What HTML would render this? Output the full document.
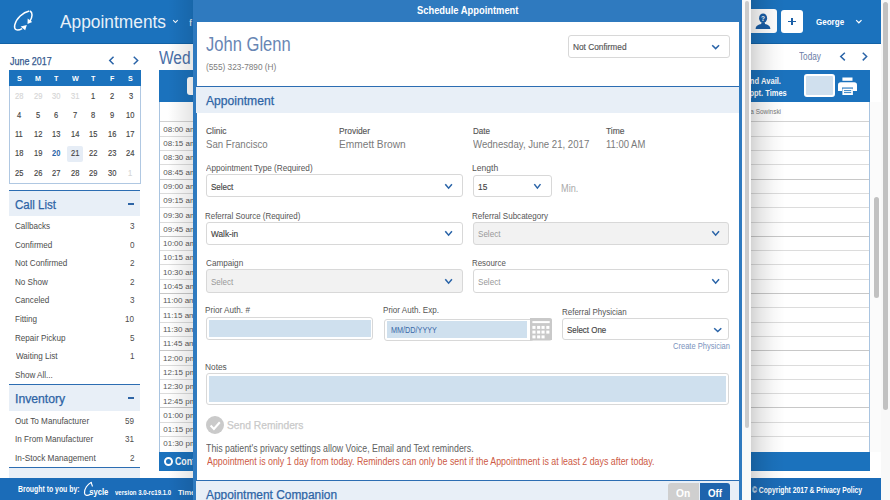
<!DOCTYPE html>
<html><head><meta charset="utf-8">
<style>
*{margin:0;padding:0;box-sizing:border-box}
html,body{width:890px;height:500px;overflow:hidden;background:#fff;font-family:"Liberation Sans",sans-serif}
.a{position:absolute;white-space:nowrap;transform-origin:0 0}
</style></head><body>
<div class="a" style="left:0.00px;top:0.00px;width:880.90px;height:43.80px;background:#1b72bd;border-bottom:1.2px solid #1262a6"></div>
<svg class="a" style="left:8px;top:6px" width="32" height="32" viewBox="0 0 32 32">
<path d="M21.3 5 C 15 6.3, 8.2 12.5, 6.7 19.2 C 5.9 23.6, 8.6 25.6, 14.2 22.6" fill="none" stroke="#fff" stroke-width="1.5"/>
<path d="M12.6 20.6 L18.8 19 L17.2 24.2 Z" fill="#fff"/>
<path d="M22 5 C 24.8 6.6, 24.6 10.8, 22 15" fill="none" stroke="#fff" stroke-width="1.5"/>
<path d="M19.7 12.6 L24.2 16 L19.5 18 Z" fill="#fff"/>
</svg>
<div class="a" style="left:60.10px;top:14px;font-size:17.50px;line-height:17.50px;color:#e8f0f8;transform:scaleX(0.9906)">Appointments</div>
<svg class="a" style="left:171.70px;top:19.40px" width="6.90" height="5.10" viewBox="0 0 6.90 5.10"><path d="M1.55 1.55 L3.45 3.55 L5.35 1.55" fill="none" stroke="#fff" stroke-width="1.10" stroke-linecap="square"/></svg>
<div class="a" style="left:189.36px;top:19px;font-size:9.25px;line-height:9.25px;color:#fff">f</div>
<div class="a" style="left:745.00px;top:9.00px;width:31.80px;height:23.80px;background:#fff;border-radius:3px"></div>
<svg class="a" style="left:755px;top:13px" width="16" height="17" viewBox="0 0 16 17">
<ellipse cx="8.1" cy="5.2" rx="4" ry="4.8" fill="#1a5ea6"/>
<path d="M0.6 16 C0.8 12.6, 3.5 11.6, 6.2 11 L6.4 9.4 L9.8 9.4 L10 11 C12.7 11.6, 15.2 12.6, 15.4 16 Z" fill="#1a5ea6"/>
<text x="8.1" y="7.6" font-size="6.5" font-family="Liberation Sans" font-weight="bold" fill="#fff" text-anchor="middle">?</text>
</svg>
<div class="a" style="left:780.80px;top:9.80px;width:22.70px;height:23.40px;background:#fff;border-radius:3px"></div>
<div class="a" style="left:788.00px;top:20.50px;width:8.00px;height:1.60px;background:#1a5ea6;"></div>
<div class="a" style="left:791.20px;top:17.60px;width:1.60px;height:7.40px;background:#1a5ea6;"></div>
<div class="a" style="left:815.78px;top:17px;font-size:9.50px;line-height:9.50px;color:#fff;font-weight:bold;transform:scaleX(0.8452)">George</div>
<svg class="a" style="left:855.10px;top:19.40px" width="7.70" height="5.40" viewBox="0 0 7.70 5.40"><path d="M1.60 1.60 L3.85 3.80 L6.10 1.60" fill="none" stroke="#fff" stroke-width="1.20" stroke-linecap="square"/></svg>
<div class="a" style="left:10.17px;top:57px;font-size:10.00px;line-height:10.00px;color:#35598f;-webkit-text-stroke:0.25px #35598f;transform:scaleX(0.8925)">June 2017</div>
<svg class="a" style="left:108.20px;top:54.50px" width="7.30" height="11.00"><path d="M5.55 1.75 L1.75 5.50 L5.55 9.25" fill="none" stroke="#2a64a8" stroke-width="1.50"/></svg>
<svg class="a" style="left:132.20px;top:54.50px" width="7.40" height="11.00"><path d="M1.75 1.75 L5.65 5.50 L1.75 9.25" fill="none" stroke="#2a64a8" stroke-width="1.50"/></svg>
<div class="a" style="left:9.30px;top:70.20px;width:131.90px;height:113.60px;background:#fff;border:1px solid #b0c8e2;border-top:0"></div>
<div class="a" style="left:9.30px;top:70.40px;width:131.30px;height:15.80px;background:#1b72bd;"></div>
<div class="a" style="left:16.83px;top:75px;font-size:7.50px;line-height:7.50px;color:#fff;font-weight:bold;transform:scaleX(0.9574)">S</div>
<div class="a" style="left:34.82px;top:75px;font-size:7.50px;line-height:7.50px;color:#fff;font-weight:bold;transform:scaleX(0.9574)">M</div>
<div class="a" style="left:54.21px;top:75px;font-size:7.50px;line-height:7.50px;color:#fff;font-weight:bold;transform:scaleX(0.9574)">T</div>
<div class="a" style="left:71.61px;top:75px;font-size:7.50px;line-height:7.50px;color:#fff;font-weight:bold;transform:scaleX(0.9574)">W</div>
<div class="a" style="left:91.31px;top:75px;font-size:7.50px;line-height:7.50px;color:#fff;font-weight:bold;transform:scaleX(0.9574)">T</div>
<div class="a" style="left:109.80px;top:75px;font-size:7.50px;line-height:7.50px;color:#fff;font-weight:bold;transform:scaleX(0.9574)">F</div>
<div class="a" style="left:128.23px;top:75px;font-size:7.50px;line-height:7.50px;color:#fff;font-weight:bold;transform:scaleX(0.9574)">S</div>
<div class="a" style="left:67.00px;top:145.90px;width:15.80px;height:15.70px;background:#e6edf6;border-radius:2px"></div>
<div class="a" style="left:15.00px;top:93px;font-size:8.25px;line-height:8.25px;color:#d6d6d6;-webkit-text-stroke:0.15px #d6d6d6;transform:scaleX(0.9091)">28</div>
<div class="a" style="left:33.62px;top:93px;font-size:8.25px;line-height:8.25px;color:#d6d6d6;-webkit-text-stroke:0.15px #d6d6d6;transform:scaleX(0.9091)">29</div>
<div class="a" style="left:52.22px;top:93px;font-size:8.25px;line-height:8.25px;color:#d6d6d6;-webkit-text-stroke:0.15px #d6d6d6;transform:scaleX(0.9091)">30</div>
<div class="a" style="left:70.86px;top:93px;font-size:8.25px;line-height:8.25px;color:#d6d6d6;-webkit-text-stroke:0.15px #d6d6d6;transform:scaleX(0.9091)">31</div>
<div class="a" style="left:91.31px;top:93px;font-size:8.25px;line-height:8.25px;color:#444;-webkit-text-stroke:0.15px #444;transform:scaleX(0.9091)">1</div>
<div class="a" style="left:110.02px;top:93px;font-size:8.25px;line-height:8.25px;color:#444;-webkit-text-stroke:0.15px #444;transform:scaleX(0.9091)">2</div>
<div class="a" style="left:128.52px;top:93px;font-size:8.25px;line-height:8.25px;color:#444;-webkit-text-stroke:0.15px #444;transform:scaleX(0.9091)">3</div>
<div class="a" style="left:17.16px;top:112px;font-size:8.25px;line-height:8.25px;color:#444;-webkit-text-stroke:0.15px #444;transform:scaleX(0.9091)">4</div>
<div class="a" style="left:35.72px;top:112px;font-size:8.25px;line-height:8.25px;color:#444;-webkit-text-stroke:0.15px #444;transform:scaleX(0.9091)">5</div>
<div class="a" style="left:54.28px;top:112px;font-size:8.25px;line-height:8.25px;color:#444;-webkit-text-stroke:0.15px #444;transform:scaleX(0.9091)">6</div>
<div class="a" style="left:72.92px;top:112px;font-size:8.25px;line-height:8.25px;color:#444;-webkit-text-stroke:0.15px #444;transform:scaleX(0.9091)">7</div>
<div class="a" style="left:91.40px;top:112px;font-size:8.25px;line-height:8.25px;color:#444;-webkit-text-stroke:0.15px #444;transform:scaleX(0.9091)">8</div>
<div class="a" style="left:110.02px;top:112px;font-size:8.25px;line-height:8.25px;color:#444;-webkit-text-stroke:0.15px #444;transform:scaleX(0.9091)">9</div>
<div class="a" style="left:126.29px;top:112px;font-size:8.25px;line-height:8.25px;color:#444;-webkit-text-stroke:0.15px #444;transform:scaleX(0.9091)">10</div>
<div class="a" style="left:15.21px;top:131px;font-size:8.25px;line-height:8.25px;color:#444;-webkit-text-stroke:0.15px #444;transform:scaleX(0.9091)">11</div>
<div class="a" style="left:33.54px;top:131px;font-size:8.25px;line-height:8.25px;color:#444;-webkit-text-stroke:0.15px #444;transform:scaleX(0.9091)">12</div>
<div class="a" style="left:52.11px;top:131px;font-size:8.25px;line-height:8.25px;color:#444;-webkit-text-stroke:0.15px #444;transform:scaleX(0.9091)">13</div>
<div class="a" style="left:70.67px;top:131px;font-size:8.25px;line-height:8.25px;color:#444;-webkit-text-stroke:0.15px #444;transform:scaleX(0.9091)">14</div>
<div class="a" style="left:89.21px;top:131px;font-size:8.25px;line-height:8.25px;color:#444;-webkit-text-stroke:0.15px #444;transform:scaleX(0.9091)">15</div>
<div class="a" style="left:107.81px;top:131px;font-size:8.25px;line-height:8.25px;color:#444;-webkit-text-stroke:0.15px #444;transform:scaleX(0.9091)">16</div>
<div class="a" style="left:126.34px;top:131px;font-size:8.25px;line-height:8.25px;color:#444;-webkit-text-stroke:0.15px #444;transform:scaleX(0.9091)">17</div>
<div class="a" style="left:14.91px;top:150px;font-size:8.25px;line-height:8.25px;color:#444;-webkit-text-stroke:0.15px #444;transform:scaleX(0.9091)">18</div>
<div class="a" style="left:33.52px;top:150px;font-size:8.25px;line-height:8.25px;color:#444;-webkit-text-stroke:0.15px #444;transform:scaleX(0.9091)">19</div>
<div class="a" style="left:52.26px;top:150px;font-size:8.25px;line-height:8.25px;color:#2a64a8;font-weight:bold;transform:scaleX(0.9091)">20</div>
<div class="a" style="left:70.82px;top:150px;font-size:8.25px;line-height:8.25px;color:#444;-webkit-text-stroke:0.15px #444;transform:scaleX(0.9091)">21</div>
<div class="a" style="left:89.34px;top:150px;font-size:8.25px;line-height:8.25px;color:#444;-webkit-text-stroke:0.15px #444;transform:scaleX(0.9091)">22</div>
<div class="a" style="left:107.90px;top:150px;font-size:8.25px;line-height:8.25px;color:#444;-webkit-text-stroke:0.15px #444;transform:scaleX(0.9091)">23</div>
<div class="a" style="left:126.36px;top:150px;font-size:8.25px;line-height:8.25px;color:#444;-webkit-text-stroke:0.15px #444;transform:scaleX(0.9091)">24</div>
<div class="a" style="left:15.00px;top:170px;font-size:8.25px;line-height:8.25px;color:#444;-webkit-text-stroke:0.15px #444;transform:scaleX(0.9091)">25</div>
<div class="a" style="left:33.60px;top:170px;font-size:8.25px;line-height:8.25px;color:#444;-webkit-text-stroke:0.15px #444;transform:scaleX(0.9091)">26</div>
<div class="a" style="left:52.24px;top:170px;font-size:8.25px;line-height:8.25px;color:#444;-webkit-text-stroke:0.15px #444;transform:scaleX(0.9091)">27</div>
<div class="a" style="left:70.80px;top:170px;font-size:8.25px;line-height:8.25px;color:#444;-webkit-text-stroke:0.15px #444;transform:scaleX(0.9091)">28</div>
<div class="a" style="left:89.32px;top:170px;font-size:8.25px;line-height:8.25px;color:#444;-webkit-text-stroke:0.15px #444;transform:scaleX(0.9091)">29</div>
<div class="a" style="left:107.92px;top:170px;font-size:8.25px;line-height:8.25px;color:#444;-webkit-text-stroke:0.15px #444;transform:scaleX(0.9091)">30</div>
<div class="a" style="left:128.41px;top:170px;font-size:8.25px;line-height:8.25px;color:#d6d6d6;-webkit-text-stroke:0.15px #d6d6d6;transform:scaleX(0.9091)">1</div>
<div class="a" style="left:8.90px;top:190.20px;width:131.10px;height:26.30px;background:#e8eff7;border-top:1.6px solid #2c6db2"></div>
<div class="a" style="left:15.12px;top:199px;font-size:12.50px;line-height:12.50px;color:#2d64a5;-webkit-text-stroke:0.25px #2d64a5;transform:scaleX(0.9234)">Call List</div>
<div class="a" style="left:128.00px;top:203.20px;width:6.00px;height:1.60px;background:#2d64a5;"></div>
<div class="a" style="left:15.20px;top:222px;font-size:9.00px;line-height:9.00px;color:#4d4d4d;transform:scaleX(0.9000)">Callbacks</div>
<div class="a" style="left:129.82px;top:222px;font-size:9.00px;line-height:9.00px;color:#4d4d4d;transform:scaleX(0.9012)">3</div>
<div class="a" style="left:15.20px;top:241px;font-size:9.00px;line-height:9.00px;color:#4d4d4d;transform:scaleX(0.9000)">Confirmed</div>
<div class="a" style="left:129.78px;top:241px;font-size:9.00px;line-height:9.00px;color:#4d4d4d;transform:scaleX(0.9012)">0</div>
<div class="a" style="left:14.95px;top:259px;font-size:9.00px;line-height:9.00px;color:#4d4d4d;transform:scaleX(0.9000)">Not Confirmed</div>
<div class="a" style="left:129.90px;top:259px;font-size:9.00px;line-height:9.00px;color:#4d4d4d;transform:scaleX(0.9012)">2</div>
<div class="a" style="left:14.95px;top:278px;font-size:9.00px;line-height:9.00px;color:#4d4d4d;transform:scaleX(0.9000)">No Show</div>
<div class="a" style="left:129.90px;top:278px;font-size:9.00px;line-height:9.00px;color:#4d4d4d;transform:scaleX(0.9012)">2</div>
<div class="a" style="left:15.20px;top:296px;font-size:9.00px;line-height:9.00px;color:#4d4d4d;transform:scaleX(0.9000)">Canceled</div>
<div class="a" style="left:129.82px;top:296px;font-size:9.00px;line-height:9.00px;color:#4d4d4d;transform:scaleX(0.9012)">3</div>
<div class="a" style="left:14.95px;top:315px;font-size:9.00px;line-height:9.00px;color:#4d4d4d;transform:scaleX(0.9000)">Fitting</div>
<div class="a" style="left:125.28px;top:315px;font-size:9.00px;line-height:9.00px;color:#4d4d4d;transform:scaleX(0.9012)">10</div>
<div class="a" style="left:14.95px;top:334px;font-size:9.00px;line-height:9.00px;color:#4d4d4d;transform:scaleX(0.9000)">Repair Pickup</div>
<div class="a" style="left:129.82px;top:334px;font-size:9.00px;line-height:9.00px;color:#4d4d4d;transform:scaleX(0.9012)">5</div>
<div class="a" style="left:15.56px;top:352px;font-size:9.00px;line-height:9.00px;color:#4d4d4d;transform:scaleX(0.9000)">Waiting List</div>
<div class="a" style="left:129.86px;top:352px;font-size:9.00px;line-height:9.00px;color:#4d4d4d;transform:scaleX(0.9012)">1</div>
<div class="a" style="left:15.24px;top:371px;font-size:9.00px;line-height:9.00px;color:#4d4d4d;transform:scaleX(0.9000)">Show All...</div>
<div class="a" style="left:8.90px;top:384.20px;width:131.10px;height:26.80px;background:#e8eff7;border-top:1.8px solid #2c6db2"></div>
<div class="a" style="left:14.60px;top:393px;font-size:12.00px;line-height:12.00px;color:#2d64a5;-webkit-text-stroke:0.25px #2d64a5;transform:scaleX(1.0166)">Inventory</div>
<div class="a" style="left:128.00px;top:397.30px;width:6.00px;height:1.60px;background:#2d64a5;"></div>
<div class="a" style="left:15.23px;top:417px;font-size:9.00px;line-height:9.00px;color:#4d4d4d;transform:scaleX(0.9051)">Out To Manufacturer</div>
<div class="a" style="left:125.36px;top:417px;font-size:9.00px;line-height:9.00px;color:#4d4d4d;transform:scaleX(0.9012)">59</div>
<div class="a" style="left:14.87px;top:435px;font-size:9.00px;line-height:9.00px;color:#4d4d4d;transform:scaleX(0.9024)">In From Manufacturer</div>
<div class="a" style="left:125.36px;top:435px;font-size:9.00px;line-height:9.00px;color:#4d4d4d;transform:scaleX(0.9012)">31</div>
<div class="a" style="left:14.86px;top:454px;font-size:9.00px;line-height:9.00px;color:#4d4d4d;transform:scaleX(0.9167)">In-Stock Management</div>
<div class="a" style="left:129.90px;top:454px;font-size:9.00px;line-height:9.00px;color:#4d4d4d;transform:scaleX(0.9012)">2</div>
<div class="a" style="left:8.90px;top:467.20px;width:131.10px;height:10.50px;background:#e8eff7;border-top:1.4px solid #2c6db2"></div>
<div class="a" style="left:159.22px;top:49px;font-size:18.25px;line-height:18.25px;color:#4a70a8;transform:scaleX(0.8505)">Wed</div>
<div class="a" style="left:159.30px;top:70.00px;width:710.70px;height:31.70px;background:#1b72bd;"></div>
<div class="a" style="left:186.60px;top:77.00px;width:23.40px;height:18.00px;background:#fff;border-radius:3px"></div>
<div class="a" style="left:158.80px;top:101.70px;width:711.20px;height:350.10px;background:#fff;border-left:1px solid #a9c4e0;border-right:1px solid #a9c4e0"></div>
<div class="a" style="left:159.80px;top:120.90px;width:709.20px;height:1.60px;background:#d2d2d2;"></div>
<div class="a" style="left:163.28px;top:126px;font-size:8.00px;line-height:8.00px;color:#595959">08:00 am</div>
<div class="a" style="left:159.80px;top:135.70px;width:709.20px;height:1.10px;background:#dcdcdc;"></div>
<div class="a" style="left:163.28px;top:140px;font-size:8.00px;line-height:8.00px;color:#595959">08:15 am</div>
<div class="a" style="left:159.80px;top:150.00px;width:709.20px;height:1.10px;background:#dcdcdc;"></div>
<div class="a" style="left:163.28px;top:154px;font-size:8.00px;line-height:8.00px;color:#595959">08:30 am</div>
<div class="a" style="left:159.80px;top:164.30px;width:709.20px;height:1.10px;background:#dcdcdc;"></div>
<div class="a" style="left:163.28px;top:169px;font-size:8.00px;line-height:8.00px;color:#595959">08:45 am</div>
<div class="a" style="left:159.80px;top:178.60px;width:709.20px;height:1.10px;background:#c8c8c8;"></div>
<div class="a" style="left:163.28px;top:183px;font-size:8.00px;line-height:8.00px;color:#595959">09:00 am</div>
<div class="a" style="left:159.80px;top:192.90px;width:709.20px;height:1.10px;background:#dcdcdc;"></div>
<div class="a" style="left:163.28px;top:197px;font-size:8.00px;line-height:8.00px;color:#595959">09:15 am</div>
<div class="a" style="left:159.80px;top:207.20px;width:709.20px;height:1.10px;background:#dcdcdc;"></div>
<div class="a" style="left:163.28px;top:212px;font-size:8.00px;line-height:8.00px;color:#595959">09:30 am</div>
<div class="a" style="left:159.80px;top:221.50px;width:709.20px;height:1.10px;background:#dcdcdc;"></div>
<div class="a" style="left:163.28px;top:226px;font-size:8.00px;line-height:8.00px;color:#595959">09:45 am</div>
<div class="a" style="left:159.80px;top:235.80px;width:709.20px;height:1.10px;background:#c8c8c8;"></div>
<div class="a" style="left:163.00px;top:240px;font-size:8.00px;line-height:8.00px;color:#595959">10:00 am</div>
<div class="a" style="left:159.80px;top:250.10px;width:709.20px;height:1.10px;background:#dcdcdc;"></div>
<div class="a" style="left:163.00px;top:254px;font-size:8.00px;line-height:8.00px;color:#595959">10:15 am</div>
<div class="a" style="left:159.80px;top:264.40px;width:709.20px;height:1.10px;background:#dcdcdc;"></div>
<div class="a" style="left:163.00px;top:269px;font-size:8.00px;line-height:8.00px;color:#595959">10:30 am</div>
<div class="a" style="left:159.80px;top:278.70px;width:709.20px;height:1.10px;background:#dcdcdc;"></div>
<div class="a" style="left:163.00px;top:283px;font-size:8.00px;line-height:8.00px;color:#595959">10:45 am</div>
<div class="a" style="left:159.80px;top:293.00px;width:709.20px;height:1.10px;background:#c8c8c8;"></div>
<div class="a" style="left:163.00px;top:297px;font-size:8.00px;line-height:8.00px;color:#595959">11:00 am</div>
<div class="a" style="left:159.80px;top:307.30px;width:709.20px;height:1.10px;background:#dcdcdc;"></div>
<div class="a" style="left:163.00px;top:312px;font-size:8.00px;line-height:8.00px;color:#595959">11:15 am</div>
<div class="a" style="left:159.80px;top:321.60px;width:709.20px;height:1.10px;background:#dcdcdc;"></div>
<div class="a" style="left:163.00px;top:326px;font-size:8.00px;line-height:8.00px;color:#595959">11:30 am</div>
<div class="a" style="left:159.80px;top:335.90px;width:709.20px;height:1.10px;background:#dcdcdc;"></div>
<div class="a" style="left:163.00px;top:340px;font-size:8.00px;line-height:8.00px;color:#595959">11:45 am</div>
<div class="a" style="left:159.80px;top:350.20px;width:709.20px;height:1.10px;background:#c8c8c8;"></div>
<div class="a" style="left:163.00px;top:355px;font-size:8.00px;line-height:8.00px;color:#595959">12:00 pm</div>
<div class="a" style="left:159.80px;top:364.50px;width:709.20px;height:1.10px;background:#dcdcdc;"></div>
<div class="a" style="left:163.00px;top:369px;font-size:8.00px;line-height:8.00px;color:#595959">12:15 pm</div>
<div class="a" style="left:159.80px;top:378.80px;width:709.20px;height:1.10px;background:#dcdcdc;"></div>
<div class="a" style="left:163.00px;top:383px;font-size:8.00px;line-height:8.00px;color:#595959">12:30 pm</div>
<div class="a" style="left:159.80px;top:393.10px;width:709.20px;height:1.10px;background:#dcdcdc;"></div>
<div class="a" style="left:163.00px;top:398px;font-size:8.00px;line-height:8.00px;color:#595959">12:45 pm</div>
<div class="a" style="left:159.80px;top:407.40px;width:709.20px;height:1.10px;background:#c8c8c8;"></div>
<div class="a" style="left:163.28px;top:412px;font-size:8.00px;line-height:8.00px;color:#595959">01:00 pm</div>
<div class="a" style="left:159.80px;top:421.70px;width:709.20px;height:1.10px;background:#dcdcdc;"></div>
<div class="a" style="left:163.28px;top:426px;font-size:8.00px;line-height:8.00px;color:#595959">01:15 pm</div>
<div class="a" style="left:159.80px;top:436.00px;width:709.20px;height:1.10px;background:#dcdcdc;"></div>
<div class="a" style="left:163.28px;top:440px;font-size:8.00px;line-height:8.00px;color:#595959">01:30 pm</div>
<div class="a" style="left:158.80px;top:452.20px;width:711.20px;height:18.50px;background:#1b72bd;"></div>
<div class="a" style="left:163.6px;top:456.8px;width:9px;height:9px;border:2.4px solid #fff;border-radius:50%"></div>
<div class="a" style="left:175.45px;top:457px;font-size:10.25px;line-height:10.25px;color:#fff;font-weight:bold;transform:scaleX(0.8600)">Confirm</div>
<div class="a" style="left:798.94px;top:52px;font-size:10.00px;line-height:10.00px;color:#6a7ca6;transform:scaleX(0.8189)">Today</div>
<svg class="a" style="left:838.50px;top:50.60px" width="7.60" height="11.10"><path d="M5.85 1.75 L1.75 5.55 L5.85 9.35" fill="none" stroke="#2a64a8" stroke-width="1.50"/></svg>
<svg class="a" style="left:861.30px;top:50.60px" width="7.40" height="11.10"><path d="M1.75 1.75 L5.65 5.55 L1.75 9.35" fill="none" stroke="#2a64a8" stroke-width="1.50"/></svg>
<div class="a" style="left:742.72px;top:77px;font-size:8.75px;line-height:8.75px;color:#fff;font-weight:bold;transform:scaleX(0.8714)">Find Avail.</div>
<div class="a" style="left:744.11px;top:89px;font-size:8.75px;line-height:8.75px;color:#fff;font-weight:bold;transform:scaleX(0.8571)">Appt. Times</div>
<div class="a" style="left:804.40px;top:73.80px;width:30.60px;height:23.50px;background:#d0e0ee;border:2.4px solid #fff;border-radius:3px;box-sizing:border-box"></div>
<svg class="a" style="left:838px;top:77px" width="19" height="18" viewBox="0 0 19 18">
<rect x="4.4" y="0.5" width="10.1" height="3.3" fill="#fff"/>
<path d="M0 8 Q0 5.2 2.8 5.2 L16.2 5.2 Q19 5.2 19 8 L19 14 L15 14 L15 10.6 L4 10.6 L4 14 L0 14 Z" fill="#fff"/>
<rect x="4.4" y="11.6" width="10.5" height="6.4" fill="#fff"/>
<rect x="6" y="13.2" width="7.2" height="0.9" fill="#1b72bd"/><rect x="6" y="15.2" width="7.2" height="0.9" fill="#1b72bd"/>
</svg>
<div class="a" style="left:730.02px;top:108px;font-size:7.00px;line-height:7.00px;color:#7a7a7a;transform:scaleX(0.9169)">Amanda Sowinski</div>
<div class="a" style="left:0.00px;top:477.70px;width:880.60px;height:22.30px;background:#1b6cb8;"></div>
<div class="a" style="left:18.35px;top:486px;font-size:8.25px;line-height:8.25px;color:#fff;font-weight:bold;transform:scaleX(0.8339)">Brought to you by:</div>
<svg class="a" style="left:83px;top:481px" width="27" height="16" viewBox="0 0 27 16">
<path d="M8.5 1.2 C 4.5 3, 1.2 8, 1.5 12 C 1.8 14.8, 4.5 15, 7.5 13.2" fill="none" stroke="#fff" stroke-width="1.2"/>
<path d="M8 1 L9.5 5.5" stroke="#fff" stroke-width="1.1"/>
<text x="6.2" y="13.8" font-size="9.2" font-family="Liberation Sans" font-weight="bold" fill="#fff" textLength="19.2" lengthAdjust="spacingAndGlyphs">sycle</text>
</svg>
<div class="a" style="left:115.07px;top:489px;font-size:7.50px;line-height:7.50px;color:#fff;font-weight:bold;transform:scaleX(0.8066)">version 3.0-rc19.1.0</div>
<div class="a" style="left:177.93px;top:489px;font-size:7.50px;line-height:7.50px;color:#fff;font-weight:bold">Time</div>
<div class="a" style="left:751.90px;top:487px;font-size:8.25px;line-height:8.25px;color:#fff;font-weight:bold;transform:scaleX(0.8190)">© Copyright 2017 &amp; Privacy Policy</div>
<div class="a" style="left:168.00px;top:0.00px;width:25.30px;height:500.00px;background:linear-gradient(to right,rgba(0,0,0,0),rgba(0,0,0,0.10));"></div>
<div class="a" style="left:751.00px;top:0.00px;width:34.00px;height:500.00px;background:linear-gradient(to right,rgba(0,0,0,0.17),rgba(0,0,0,0.09) 30%,rgba(0,0,0,0.03) 65%,rgba(0,0,0,0));"></div>
<div class="a" style="left:870.00px;top:101.70px;width:10.60px;height:350.10px;background:#fbfbfb;"></div>
<div class="a" style="left:874.00px;top:196.80px;width:5.00px;height:101.20px;background:#c1c1c1;border-radius:2.5px"></div>
<div class="a" style="left:880.60px;top:0.00px;width:9.40px;height:500.00px;background:#f8f8f8;"></div>
<div class="a" style="left:883.00px;top:2.00px;width:5.00px;height:407.60px;background:#c1c1c1;border-radius:2.5px"></div>
<div class="a" style="left:193.10px;top:0.00px;width:549.00px;height:500.00px;background:#2f7abf;"></div>
<div class="a" style="left:417.02px;top:5px;font-size:11.00px;line-height:11.00px;color:#fff;font-weight:bold;transform:scaleX(0.8494)">Schedule Appointment</div>
<div class="a" style="left:196.60px;top:21.70px;width:542.50px;height:478.30px;background:#fff;"></div>
<div class="a" style="left:742.10px;top:0.00px;width:9.00px;height:500.00px;background:#f9f9f9;"></div>
<div class="a" style="left:744.70px;top:1.00px;width:4.80px;height:426.60px;background:#cbcbcb;border-radius:2.4px"></div>
<div class="a" style="left:206.25px;top:35px;font-size:19.50px;line-height:19.50px;color:#6886b4;transform:scaleX(0.8494)">John Glenn</div>
<div class="a" style="left:205.70px;top:62px;font-size:9.50px;line-height:9.50px;color:#7d7d7d;transform:scaleX(0.8705)">(555) 323-7890 (H)</div>
<div class="a" style="left:568.10px;top:34.70px;width:161.80px;height:23.60px;background:#fff;border:1px solid #d8d8d8;border-radius:3px;box-sizing:border-box"></div>
<div class="a" style="left:573.14px;top:43px;font-size:8.75px;line-height:8.75px;color:#555;-webkit-text-stroke:0.15px #555;transform:scaleX(0.9488)">Not Confirmed</div>
<svg class="a" style="left:711.10px;top:43.80px" width="9.30" height="6.40" viewBox="0 0 9.30 6.40"><path d="M1.75 1.75 L4.65 4.65 L7.55 1.75" fill="none" stroke="#2a64a8" stroke-width="1.50" stroke-linecap="square"/></svg>
<div class="a" style="left:196.00px;top:85.90px;width:543.10px;height:26.70px;background:#e8eff7;border-top:1.5px solid #2c6db2"></div>
<div class="a" style="left:206.10px;top:95px;font-size:12.00px;line-height:12.00px;color:#2d64a5;-webkit-text-stroke:0.25px #2d64a5;transform:scaleX(1.0095)">Appointment</div>
<div class="a" style="left:205.68px;top:126px;font-size:9.50px;line-height:9.50px;color:#555;-webkit-text-stroke:0.15px #555;transform:scaleX(0.8794)">Clinic</div>
<div class="a" style="left:339.13px;top:126px;font-size:9.50px;line-height:9.50px;color:#555;-webkit-text-stroke:0.15px #555;transform:scaleX(0.8770)">Provider</div>
<div class="a" style="left:472.56px;top:126px;font-size:9.50px;line-height:9.50px;color:#555;-webkit-text-stroke:0.15px #555;transform:scaleX(0.8485)">Date</div>
<div class="a" style="left:606.03px;top:126px;font-size:9.50px;line-height:9.50px;color:#555;-webkit-text-stroke:0.15px #555;transform:scaleX(0.8937)">Time</div>
<div class="a" style="left:205.57px;top:139px;font-size:10.50px;line-height:10.50px;color:#7a7a7a;transform:scaleX(0.9184)">San Francisco</div>
<div class="a" style="left:339.19px;top:139px;font-size:10.50px;line-height:10.50px;color:#7a7a7a;transform:scaleX(0.9687)">Emmett Brown</div>
<div class="a" style="left:473.05px;top:139px;font-size:11.00px;line-height:11.00px;color:#7a7a7a;transform:scaleX(0.8747)">Wednesday, June 21, 2017</div>
<div class="a" style="left:606.29px;top:139px;font-size:11.00px;line-height:11.00px;color:#7a7a7a;transform:scaleX(0.8602)">11:00 AM</div>
<div class="a" style="left:206.10px;top:164px;font-size:9.25px;line-height:9.25px;color:#555;transform:scaleX(0.8837)">Appointment Type (Required)</div>
<div class="a" style="left:472.42px;top:164px;font-size:9.25px;line-height:9.25px;color:#555;transform:scaleX(0.9235)">Length</div>
<div class="a" style="left:206.10px;top:174.40px;width:256.80px;height:23.00px;background:#fff;border:1px solid #d8d8d8;border-radius:3px;box-sizing:border-box"></div>
<div class="a" style="left:211.44px;top:182px;font-size:9.50px;line-height:9.50px;color:#444;-webkit-text-stroke:0.15px #444;transform:scaleX(0.8460)">Select</div>
<svg class="a" style="left:444.30px;top:183.00px" width="9.20" height="6.90" viewBox="0 0 9.20 6.90"><path d="M1.75 1.75 L4.60 5.15 L7.45 1.75" fill="none" stroke="#2a64a8" stroke-width="1.50" stroke-linecap="square"/></svg>
<div class="a" style="left:473.10px;top:174.50px;width:78.60px;height:22.70px;background:#fff;border:1px solid #d8d8d8;border-radius:3px;box-sizing:border-box"></div>
<div class="a" style="left:478.27px;top:183px;font-size:9.25px;line-height:9.25px;color:#444;-webkit-text-stroke:0.15px #444;transform:scaleX(0.9018)">15</div>
<svg class="a" style="left:533.30px;top:183.00px" width="8.80" height="6.90" viewBox="0 0 8.80 6.90"><path d="M1.75 1.75 L4.40 5.15 L7.05 1.75" fill="none" stroke="#2a64a8" stroke-width="1.50" stroke-linecap="square"/></svg>
<div class="a" style="left:561.37px;top:183px;font-size:10.50px;line-height:10.50px;color:#aaa;transform:scaleX(0.8719)">Min.</div>
<div class="a" style="left:205.46px;top:212px;font-size:8.75px;line-height:8.75px;color:#555;transform:scaleX(0.9077)">Referral Source (Required)</div>
<div class="a" style="left:472.46px;top:212px;font-size:8.75px;line-height:8.75px;color:#555;transform:scaleX(0.9184)">Referral Subcategory</div>
<div class="a" style="left:206.10px;top:221.70px;width:256.80px;height:23.60px;background:#fff;border:1px solid #d8d8d8;border-radius:3px;box-sizing:border-box"></div>
<div class="a" style="left:211.36px;top:230px;font-size:9.00px;line-height:9.00px;color:#444;-webkit-text-stroke:0.15px #444;transform:scaleX(0.9165)">Walk-in</div>
<svg class="a" style="left:444.30px;top:230.30px" width="9.20" height="6.90" viewBox="0 0 9.20 6.90"><path d="M1.75 1.75 L4.60 5.15 L7.45 1.75" fill="none" stroke="#2a64a8" stroke-width="1.50" stroke-linecap="square"/></svg>
<div class="a" style="left:473.10px;top:221.70px;width:256.10px;height:23.60px;background:#f2f2f2;border:1px solid #d8d8d8;border-radius:3px;box-sizing:border-box"></div>
<div class="a" style="left:478.14px;top:230px;font-size:9.00px;line-height:9.00px;color:#999;transform:scaleX(0.8970)">Select</div>
<svg class="a" style="left:710.90px;top:230.30px" width="9.30" height="6.90" viewBox="0 0 9.30 6.90"><path d="M1.75 1.75 L4.65 5.15 L7.55 1.75" fill="none" stroke="#2a64a8" stroke-width="1.50" stroke-linecap="square"/></svg>
<div class="a" style="left:205.59px;top:259px;font-size:8.75px;line-height:8.75px;color:#555;transform:scaleX(0.9318)">Campaign</div>
<div class="a" style="left:472.47px;top:259px;font-size:8.75px;line-height:8.75px;color:#555;transform:scaleX(0.9022)">Resource</div>
<div class="a" style="left:206.10px;top:269.20px;width:256.80px;height:23.60px;background:#f2f2f2;border:1px solid #d8d8d8;border-radius:3px;box-sizing:border-box"></div>
<div class="a" style="left:211.04px;top:277px;font-size:9.50px;line-height:9.50px;color:#999;transform:scaleX(0.8460)">Select</div>
<svg class="a" style="left:444.30px;top:278.00px" width="9.20" height="6.90" viewBox="0 0 9.20 6.90"><path d="M1.75 1.75 L4.60 5.15 L7.45 1.75" fill="none" stroke="#2a64a8" stroke-width="1.50" stroke-linecap="square"/></svg>
<div class="a" style="left:473.10px;top:269.20px;width:256.10px;height:23.60px;background:#fff;border:1px solid #d8d8d8;border-radius:3px;box-sizing:border-box"></div>
<div class="a" style="left:478.14px;top:277px;font-size:9.50px;line-height:9.50px;color:#999;transform:scaleX(0.8498)">Select</div>
<svg class="a" style="left:710.90px;top:278.00px" width="9.30" height="6.90" viewBox="0 0 9.30 6.90"><path d="M1.75 1.75 L4.65 5.15 L7.55 1.75" fill="none" stroke="#2a64a8" stroke-width="1.50" stroke-linecap="square"/></svg>
<div class="a" style="left:205.35px;top:306px;font-size:9.00px;line-height:9.00px;color:#555;transform:scaleX(0.9069)">Prior Auth. #</div>
<div class="a" style="left:383.46px;top:306px;font-size:9.00px;line-height:9.00px;color:#555;transform:scaleX(0.8954)">Prior Auth. Exp.</div>
<div class="a" style="left:562.06px;top:307px;font-size:9.50px;line-height:9.50px;color:#555;transform:scaleX(0.8387)">Referral Physician</div>
<div class="a" style="left:206.00px;top:316.70px;width:167.40px;height:23.40px;background:#fff;border:1px solid #d8d8d8;border-radius:3px;box-sizing:border-box"></div>
<div class="a" style="left:209.00px;top:319.90px;width:162.20px;height:17.00px;background:#cfe0ee;"></div>
<div class="a" style="left:384.10px;top:318.60px;width:149.90px;height:22.90px;background:#fff;border:1px solid #d8d8d8;border-radius:3px;box-sizing:border-box"></div>
<div class="a" style="left:387.10px;top:321.20px;width:140.20px;height:17.20px;background:#cfe0ee;"></div>
<div class="a" style="left:390.52px;top:326px;font-size:8.75px;line-height:8.75px;color:#3a68a8;transform:scaleX(0.8292)">MM/DD/YYYY</div>
<svg class="a" style="left:529.5px;top:318.1px" width="22.4" height="22.5" viewBox="0 0 22.4 22.5">
<path d="M0 0 L19.4 0 Q22.4 0 22.4 3 L22.4 19.5 Q22.4 22.5 19.4 22.5 L0 22.5 Z" fill="#c9c9c9"/>
<rect x="2.4" y="3.1" width="17.3" height="2" fill="#fff"/>
<g fill="#fff">
<rect x="2.4" y="7.9" width="3.1" height="3"/><rect x="7.1" y="7.9" width="3.1" height="3"/><rect x="11.5" y="7.9" width="3.1" height="3"/><rect x="16.3" y="7.9" width="3.1" height="3"/>
<rect x="2.4" y="12.6" width="3.1" height="3"/><rect x="7.1" y="12.6" width="3.1" height="3"/><rect x="11.5" y="12.6" width="3.1" height="3"/><rect x="16.3" y="12.6" width="3.1" height="3"/>
<rect x="2.4" y="17.4" width="3.1" height="3"/><rect x="7.1" y="17.4" width="3.1" height="3"/><rect x="11.5" y="17.4" width="3.1" height="3"/>
</g></svg>
<div class="a" style="left:562.10px;top:317.80px;width:167.30px;height:22.70px;background:#fff;border:1px solid #d8d8d8;border-radius:3px;box-sizing:border-box"></div>
<div class="a" style="left:567.14px;top:327px;font-size:8.25px;line-height:8.25px;color:#444;-webkit-text-stroke:0.15px #444;transform:scaleX(0.9612)">Select One</div>
<svg class="a" style="left:712.80px;top:327.30px" width="9.50" height="6.30" viewBox="0 0 9.50 6.30"><path d="M1.75 1.75 L4.75 4.55 L7.75 1.75" fill="none" stroke="#2a64a8" stroke-width="1.50" stroke-linecap="square"/></svg>
<div class="a" style="left:672.92px;top:341px;font-size:9.50px;line-height:9.50px;color:#7a93bd;transform:scaleX(0.7932)">Create Physician</div>
<div class="a" style="left:205.23px;top:363px;font-size:9.25px;line-height:9.25px;color:#555;transform:scaleX(0.9013)">Notes</div>
<div class="a" style="left:206.00px;top:372.80px;width:523.20px;height:31.80px;background:#fff;border:1px solid #d8d8d8;border-radius:3px;box-sizing:border-box"></div>
<div class="a" style="left:208.80px;top:375.70px;width:517.60px;height:26.00px;background:#cfe0ee;"></div>
<div class="a" style="left:206px;top:415.8px;width:18.3px;height:18.5px;border-radius:50%;background:#cacaca"></div>
<svg class="a" style="left:206px;top:415.8px" width="18.3" height="18.5"><path d="M4.6 9.6 L7.9 12.9 L13.8 6.2" fill="none" stroke="#fff" stroke-width="2.1"/></svg>
<div class="a" style="left:226.74px;top:419px;font-size:11.75px;line-height:11.75px;color:#c9c9c9;-webkit-text-stroke:0.25px #c9c9c9;transform:scaleX(0.8730)">Send Reminders</div>
<div class="a" style="left:206.32px;top:444px;font-size:10.25px;line-height:10.25px;color:#5e5e5e;transform:scaleX(0.8585)">This patient's privacy settings allow Voice, Email and Text reminders.</div>
<div class="a" style="left:206.50px;top:457px;font-size:10.25px;line-height:10.25px;color:#cd5a45;transform:scaleX(0.8637)">Appointment is only 1 day from today. Reminders can only be sent if the Appointment is at least 2 days after today.</div>
<div class="a" style="left:196.00px;top:480.40px;width:543.10px;height:19.60px;background:#e8eff7;border-top:1.8px solid #2c6db2"></div>
<div class="a" style="left:206.20px;top:489px;font-size:12.00px;line-height:12.00px;color:#2d64a5;-webkit-text-stroke:0.25px #2d64a5;transform:scaleX(0.9925)">Appointment Companion</div>
<div class="a" style="left:668.10px;top:483.30px;width:31.40px;height:26.70px;background:#cfcfcf;border-radius:3px 0 0 3px"></div>
<div class="a" style="left:699.50px;top:483.30px;width:30.30px;height:26.70px;background:#1e64ad;border-radius:0 3px 3px 0"></div>
<div class="a" style="left:676.29px;top:489px;font-size:10.00px;line-height:10.00px;color:#fff;font-weight:bold;transform:scaleX(1.0233)">On</div>
<div class="a" style="left:707.71px;top:489px;font-size:10.00px;line-height:10.00px;color:#fff;font-weight:bold;transform:scaleX(0.9680)">Off</div>
</body></html>
